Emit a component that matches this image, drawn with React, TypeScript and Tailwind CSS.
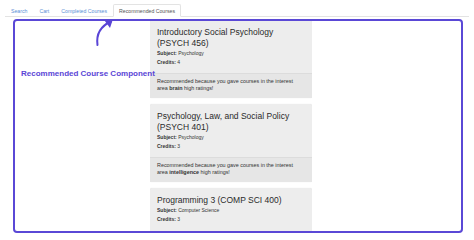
type Course = {
  title: string;
  subject: string;
  credits: number;
  area?: string;
};

const courses: Course[] = [
  {
    title: "Introductory Social Psychology (PSYCH 456)",
    subject: "Psychology",
    credits: 4,
    area: "brain",
  },
  {
    title: "Psychology, Law, and Social Policy (PSYCH 401)",
    subject: "Psychology",
    credits: 3,
    area: "intelligence",
  },
  {
    title: "Programming 3 (COMP SCI 400)",
    subject: "Computer Science",
    credits: 3,
  },
];

function CourseCard({ course }: { course: Course }) {
  return (
    <div className="bg-[#ededed] rounded-[2px] shadow-[0_0_1px_rgba(0,0,0,0.15)] shrink-0">
      <div className="px-[7px] pt-[7px] pb-[6px]">
        <h3 className="text-[8.5px] leading-[11px] text-[#2a2a2a]">{course.title}</h3>
        <p className="text-[5px] leading-[9px] text-[#333]">
          <span className="font-bold">Subject:</span> {course.subject}
        </p>
        <p className="text-[5px] leading-[9px] text-[#333]">
          <span className="font-bold">Credits:</span> {course.credits}
        </p>
      </div>
      {course.area ? (
        <div className="bg-[#e6e6e6] border-t border-[#dcdcdc] pl-[7px] pr-[10px] pt-[4px] pb-[6px] text-[5.4px] leading-[7px] text-[#333]">
          Recommended because you gave courses in the interest area{" "}
          <span className="font-bold">{course.area}</span> high ratings!
        </div>
      ) : (
        <div className="h-[14px]" />
      )}
    </div>
  );
}

export default function App() {
  const tabs = ["Search", "Cart", "Completed Courses", "Recommended Courses"];
  return (
    <div className="relative w-[474px] h-[240px] bg-white overflow-hidden font-['Liberation_Sans',Arial,sans-serif]">
      <div className="flex mx-[5px] mt-[4px] border-b border-[#e3e3e3] h-[13px]">
        {tabs.map((t, i) => {
          const active = i === tabs.length - 1;
          return (
            <div
              key={t}
              className={
                active
                  ? "px-[5px] text-[5.2px] leading-[12px] text-[#555] bg-white border border-[#e3e3e3] border-b-white rounded-t-[2px] -mb-px"
                  : "px-[5px] text-[5.2px] leading-[12px] text-[#5b8fd6] border border-transparent"
              }
            >
              {t}
            </div>
          );
        })}
      </div>

      <div className="ml-[150px] w-[162px] mt-[3px] h-[213px] overflow-hidden flex flex-col gap-[6px]">
        {courses.map((c) => (
          <CourseCard key={c.title} course={c} />
        ))}
      </div>

      {/* annotation overlay */}
      <div className="absolute left-[13px] top-[19px] w-[450px] h-[214px] border-2 border-[#5a48d6] rounded-[4px] pointer-events-none" />
      <div className="absolute left-[21px] top-[68px] text-[8px] font-bold text-[#5a45d6] leading-[11px]">
        Recommended Course Component
      </div>
      <svg className="absolute left-0 top-0" width="474" height="240" viewBox="0 0 474 240">
        <path d="M97.5 45 C96 34, 101 26, 111 21.5" fill="none" stroke="#5a45d6" strokeWidth="2" strokeLinecap="round" />
        <path d="M104.5 20.5 L112.5 20.5 L110 28 Z" fill="#5a45d6" />
      </svg>
    </div>
  );
}
